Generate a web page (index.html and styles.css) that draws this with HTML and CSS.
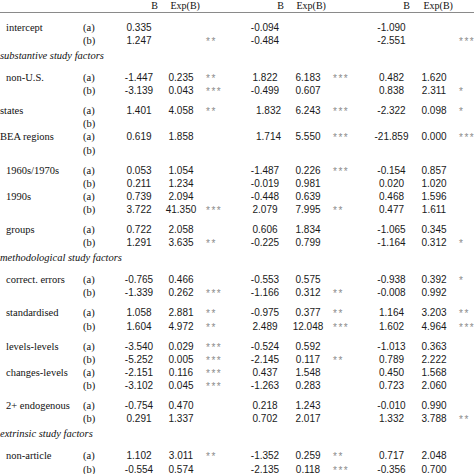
FILE: index.html
```html
<!DOCTYPE html>
<html>
<head>
<meta charset="utf-8">
<link rel="stylesheet" href="styles.css">
</head>
<body>
<div class="table">
  <div class="head">
    <span></span><span></span>
    <span class="hb">B</span><span class="he">Exp(B)</span><span></span>
    <span class="hb">B</span><span class="he">Exp(B)</span><span></span>
    <span class="hb hb3">B</span><span class="he">Exp(B)</span><span></span>
  </div>

  <div class="row first"><span class="lab">intercept</span><span class="ab">(a)</span><span class="n">0.335</span><span class="n"></span><span class="st"></span><span class="n">-0.094</span><span class="n"></span><span class="st"></span><span class="n">-1.090</span><span class="n"></span><span class="st"></span></div>
  <div class="row"><span class="lab"></span><span class="ab">(b)</span><span class="n">1.247</span><span class="n"></span><span class="st">**</span><span class="n">-0.484</span><span class="n"></span><span class="st"></span><span class="n">-2.551</span><span class="n"></span><span class="st">***</span></div>

  <div class="sec">substantive study factors</div>
  <div class="row"><span class="lab">non-U.S.</span><span class="ab">(a)</span><span class="n">-1.447</span><span class="n">0.235</span><span class="st">**</span><span class="n">1.822</span><span class="n">6.183</span><span class="st">***</span><span class="n">0.482</span><span class="n">1.620</span><span class="st"></span></div>
  <div class="row"><span class="lab"></span><span class="ab">(b)</span><span class="n">-3.139</span><span class="n">0.043</span><span class="st">***</span><span class="n">-0.499</span><span class="n">0.607</span><span class="st"></span><span class="n">0.838</span><span class="n">2.311</span><span class="st">*</span></div>

  <div class="row gap"><span class="lab flush">states</span><span class="ab">(a)</span><span class="n">1.401</span><span class="n">4.058</span><span class="st">**</span><span class="n shift">1.832</span><span class="n">6.243</span><span class="st">***</span><span class="n">-2.322</span><span class="n">0.098</span><span class="st">*</span></div>
  <div class="row"><span class="lab"></span><span class="ab">(b)</span><span class="n"></span><span class="n"></span><span class="st"></span><span class="n"></span><span class="n"></span><span class="st"></span><span class="n"></span><span class="n"></span><span class="st"></span></div>
  <div class="row"><span class="lab flush">BEA regions</span><span class="ab">(a)</span><span class="n">0.619</span><span class="n">1.858</span><span class="st"></span><span class="n shift">1.714</span><span class="n">5.550</span><span class="st">***</span><span class="n">-21.859</span><span class="n">0.000</span><span class="st">***</span></div>
  <div class="row"><span class="lab"></span><span class="ab">(b)</span><span class="n"></span><span class="n"></span><span class="st"></span><span class="n"></span><span class="n"></span><span class="st"></span><span class="n"></span><span class="n"></span><span class="st"></span></div>

  <div class="row gap"><span class="lab">1960s/1970s</span><span class="ab">(a)</span><span class="n">0.053</span><span class="n">1.054</span><span class="st"></span><span class="n">-1.487</span><span class="n">0.226</span><span class="st">***</span><span class="n">-0.154</span><span class="n">0.857</span><span class="st"></span></div>
  <div class="row"><span class="lab"></span><span class="ab">(b)</span><span class="n">0.211</span><span class="n">1.234</span><span class="st"></span><span class="n">-0.019</span><span class="n">0.981</span><span class="st"></span><span class="n">0.020</span><span class="n">1.020</span><span class="st"></span></div>
  <div class="row"><span class="lab">1990s</span><span class="ab">(a)</span><span class="n">0.739</span><span class="n">2.094</span><span class="st"></span><span class="n">-0.448</span><span class="n">0.639</span><span class="st"></span><span class="n">0.468</span><span class="n">1.596</span><span class="st"></span></div>
  <div class="row"><span class="lab"></span><span class="ab">(b)</span><span class="n">3.722</span><span class="n">41.350</span><span class="st">***</span><span class="n">2.079</span><span class="n">7.995</span><span class="st">**</span><span class="n">0.477</span><span class="n">1.611</span><span class="st"></span></div>

  <div class="row gap"><span class="lab">groups</span><span class="ab">(a)</span><span class="n">0.722</span><span class="n">2.058</span><span class="st"></span><span class="n">0.606</span><span class="n">1.834</span><span class="st"></span><span class="n">-1.065</span><span class="n">0.345</span><span class="st"></span></div>
  <div class="row"><span class="lab"></span><span class="ab">(b)</span><span class="n">1.291</span><span class="n">3.635</span><span class="st">**</span><span class="n">-0.225</span><span class="n">0.799</span><span class="st"></span><span class="n">-1.164</span><span class="n">0.312</span><span class="st">*</span></div>

  <div class="sec">methodological study factors</div>
  <div class="row"><span class="lab">correct. errors</span><span class="ab">(a)</span><span class="n">-0.765</span><span class="n">0.466</span><span class="st"></span><span class="n">-0.553</span><span class="n">0.575</span><span class="st"></span><span class="n">-0.938</span><span class="n">0.392</span><span class="st">*</span></div>
  <div class="row"><span class="lab"></span><span class="ab">(b)</span><span class="n">-1.339</span><span class="n">0.262</span><span class="st">***</span><span class="n">-1.166</span><span class="n">0.312</span><span class="st">**</span><span class="n">-0.008</span><span class="n">0.992</span><span class="st"></span></div>

  <div class="row gap"><span class="lab">standardised</span><span class="ab">(a)</span><span class="n">1.058</span><span class="n">2.881</span><span class="st">**</span><span class="n">-0.975</span><span class="n">0.377</span><span class="st">**</span><span class="n">1.164</span><span class="n">3.203</span><span class="st">**</span></div>
  <div class="row"><span class="lab"></span><span class="ab">(b)</span><span class="n">1.604</span><span class="n">4.972</span><span class="st">**</span><span class="n">2.489</span><span class="n">12.048</span><span class="st">***</span><span class="n">1.602</span><span class="n">4.964</span><span class="st">***</span></div>

  <div class="row gap"><span class="lab">levels-levels</span><span class="ab">(a)</span><span class="n">-3.540</span><span class="n">0.029</span><span class="st">***</span><span class="n">-0.524</span><span class="n">0.592</span><span class="st"></span><span class="n">-1.013</span><span class="n">0.363</span><span class="st"></span></div>
  <div class="row"><span class="lab"></span><span class="ab">(b)</span><span class="n">-5.252</span><span class="n">0.005</span><span class="st">***</span><span class="n">-2.145</span><span class="n">0.117</span><span class="st">**</span><span class="n">0.789</span><span class="n">2.222</span><span class="st"></span></div>
  <div class="row"><span class="lab">changes-levels</span><span class="ab">(a)</span><span class="n">-2.151</span><span class="n">0.116</span><span class="st">***</span><span class="n">0.437</span><span class="n">1.548</span><span class="st"></span><span class="n">0.450</span><span class="n">1.568</span><span class="st"></span></div>
  <div class="row"><span class="lab"></span><span class="ab">(b)</span><span class="n">-3.102</span><span class="n">0.045</span><span class="st">***</span><span class="n">-1.263</span><span class="n">0.283</span><span class="st"></span><span class="n">0.723</span><span class="n">2.060</span><span class="st"></span></div>

  <div class="row gap"><span class="lab">2+ endogenous</span><span class="ab">(a)</span><span class="n">-0.754</span><span class="n">0.470</span><span class="st"></span><span class="n">0.218</span><span class="n">1.243</span><span class="st"></span><span class="n">-0.010</span><span class="n">0.990</span><span class="st"></span></div>
  <div class="row"><span class="lab"></span><span class="ab">(b)</span><span class="n">0.291</span><span class="n">1.337</span><span class="st"></span><span class="n">0.702</span><span class="n">2.017</span><span class="st"></span><span class="n">1.332</span><span class="n">3.788</span><span class="st">**</span></div>

  <div class="sec">extrinsic study factors</div>
  <div class="row"><span class="lab">non-article</span><span class="ab">(a)</span><span class="n">1.102</span><span class="n">3.011</span><span class="st">**</span><span class="n">-1.352</span><span class="n">0.259</span><span class="st">**</span><span class="n">0.717</span><span class="n">2.048</span><span class="st"></span></div>
  <div class="row"><span class="lab"></span><span class="ab">(b)</span><span class="n">-0.554</span><span class="n">0.574</span><span class="st"></span><span class="n">-2.135</span><span class="n">0.118</span><span class="st">***</span><span class="n">-0.356</span><span class="n">0.700</span><span class="st"></span></div>
</div>
</body>
</html>
```
FILE: styles.css
```css
html, body {
  margin: 0;
  padding: 0;
  background: #ffffff;
}

body {
  width: 474px;
  height: 474px;
  overflow: hidden;
  font-family: "Liberation Serif", "Times New Roman", serif;
  color: #111111;
}

.table {
  width: 474px;
}

.head,
.row {
  display: grid;
  grid-template-columns: 82px 36px 42px 42px 42px 42px 44px 40px 43px 42px 1fr;
  white-space: nowrap;
}

.head {
  height: 12px;
  line-height: 12px;
  font-size: 10px;
  border-bottom: 1px solid #8a8a8a;
}

.hb {
  text-align: right;
  padding-right: 2px;
}

.hb3 {
  padding-right: 3px;
}

.he {
  padding-left: 10.5px;
}

.row {
  height: 13.2px;
  line-height: 13.2px;
}

.row.first {
  margin-top: 7.7px;
}

.row.gap {
  margin-top: 6.8px;
}

.sec {
  height: 13.2px;
  line-height: 13.2px;
  margin-top: 1.8px;
  font-size: 10.5px;
  font-style: italic;
  white-space: nowrap;
}

.sec + .row {
  margin-top: 8.8px;
}

.lab {
  font-size: 10.5px;
  padding-left: 6px;
}

.lab.flush {
  padding-left: 0;
}

.ab {
  font-size: 10.5px;
  padding-left: 1px;
}

.n {
  font-family: "Liberation Sans", Arial, sans-serif;
  font-size: 10px;
  color: #1a1a1a;
  text-align: center;
}

.n.shift {
  padding-left: 7px;
}

.st {
  font-family: "Liberation Sans", Arial, sans-serif;
  font-size: 10px;
  line-height: 15.2px;
  letter-spacing: 1.5px;
  color: #8c8c8c;
  padding-left: 4px;
}

.row .st:nth-child(8) {
  padding-left: 3px;
}
```
